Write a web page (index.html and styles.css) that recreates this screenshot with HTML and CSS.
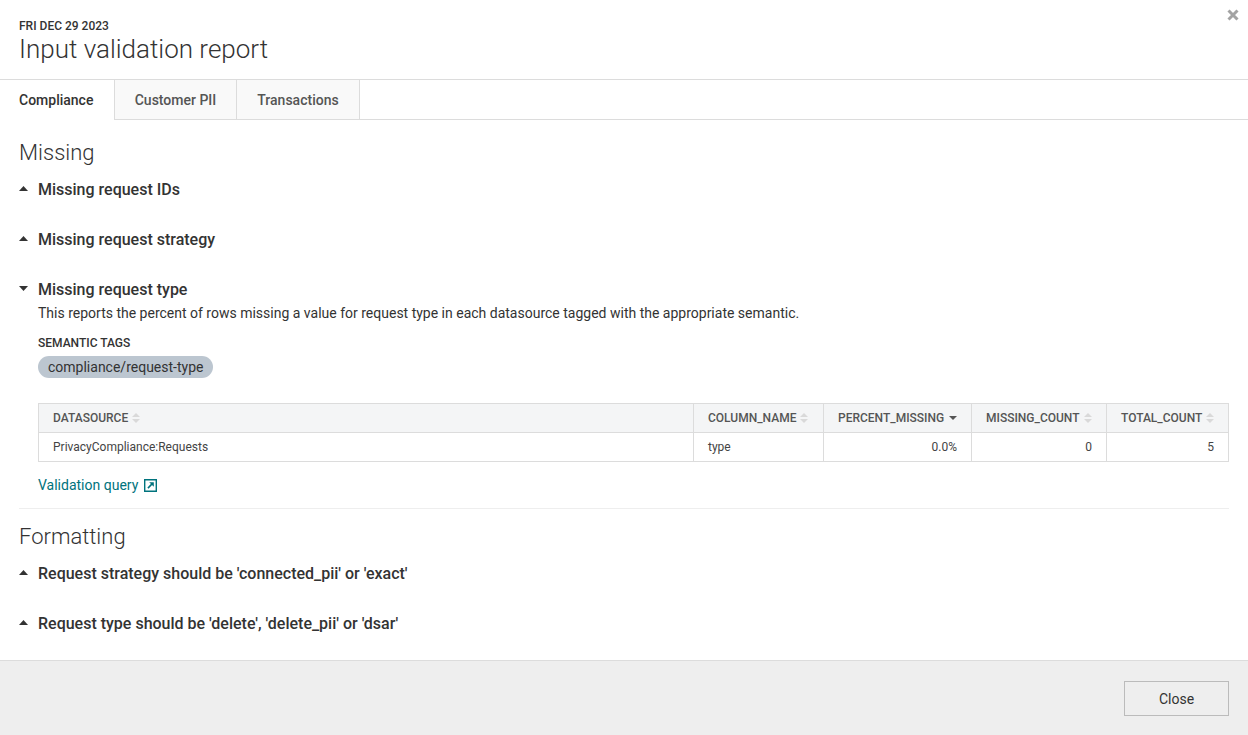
FILE: index.html
```html
<!DOCTYPE html>
<html lang="en">
<head>
    <meta charset="UTF-8">
    <meta name="viewport" content="width=device-width, initial-scale=1.0">
    <title>Input validation report</title>
    <link rel="stylesheet" href="styles.css">
</head>
<body>
    <div class="modal">
        <!-- Header -->
        <div class="modal-header">
            <div class="date">FRI DEC 29 2023</div>
            <h1>Input validation report</h1>
            <button type="button" class="close-x" aria-label="Close">
                <svg width="12" height="12" viewBox="0 0 12 12"><path d="M1.5 1.5l9 9M10.5 1.5l-9 9" stroke="#a3a3a3" stroke-width="3" fill="none"/></svg>
            </button>
        </div>

        <!-- Tabs -->
        <div class="tabs">
            <div class="tab active">Compliance</div>
            <div class="tab">Customer PII</div>
            <div class="tab">Transactions</div>
        </div>

        <div class="modal-body">
            <h2>Missing</h2>
            <div class="section">
                <div class="section-title"><span class="caret up"></span>Missing request IDs</div>
            </div>
            <div class="section">
                <div class="section-title"><span class="caret up"></span>Missing request strategy</div>
            </div>
            <div class="section open">
                <div class="section-title"><span class="caret down"></span>Missing request type</div>
                <div class="section-content">
                    <p class="description">This reports the percent of rows missing a value for request type in each datasource tagged with the appropriate semantic.</p>
                    <div class="tags-label">SEMANTIC TAGS</div>
                    <span class="tag">compliance/request-type</span>
                    <table class="report-table">
                        <thead>
                            <tr>
                                <th class="col-source">DATASOURCE<span class="sort"></span></th>
                                <th class="col-name">COLUMN_NAME<span class="sort"></span></th>
                                <th class="col-percent">PERCENT_MISSING<span class="sort-active"></span></th>
                                <th class="col-missing">MISSING_COUNT<span class="sort"></span></th>
                                <th class="col-total">TOTAL_COUNT<span class="sort"></span></th>
                            </tr>
                        </thead>
                        <tbody>
                            <tr>
                                <td>PrivacyCompliance:Requests</td>
                                <td>type</td>
                                <td class="num">0.0%</td>
                                <td class="num">0</td>
                                <td class="num">5</td>
                            </tr>
                        </tbody>
                    </table>
                    <a class="query-link" href="#">Validation query
                        <svg width="13" height="13" viewBox="0 0 13 13"><path d="M.7.7h11.6v11.6H.7z" fill="none" stroke="#00737d" stroke-width="1.4"/><path d="M3.9 9.1L8.6 4.4" fill="none" stroke="#00737d" stroke-width="1.5"/><path d="M5.2 3.2h4.6v4.6z" fill="#00737d"/></svg>
                    </a>
                </div>
            </div>
            <hr class="divider">
            <h2>Formatting</h2>
            <div class="section">
                <div class="section-title"><span class="caret up"></span>Request strategy should be 'connected_pii' or 'exact'</div>
            </div>
            <div class="section">
                <div class="section-title"><span class="caret up"></span>Request type should be 'delete', 'delete_pii' or 'dsar'</div>
            </div>
        </div>

        <div class="modal-footer">
            <button type="button" class="btn">Close</button>
        </div>
    </div>
</body>
</html>
```

FILE: styles.css
```css
* {
    margin: 0;
    padding: 0;
    box-sizing: border-box;
    font-family: Roboto, "Liberation Sans", sans-serif;
}

body {
    background: #fff;
    color: #333;
    overflow: hidden;
}

.modal {
    display: flex;
    flex-direction: column;
    height: 735px;
}

.modal-header {
    position: relative;
    height: 80px;
    padding: 19px 19px 0;
    border-bottom: 1px solid #dcdcdc;
}

.date {
    font-size: 12px;
    line-height: 14px;
    font-weight: 500;
    color: #333;
}

h1 {
    font-size: 26px;
    line-height: 32px;
    font-weight: 300;
    color: #333;
}

.close-x {
    position: absolute;
    top: 9px;
    right: 9px;
    width: 12px;
    height: 12px;
    display: flex;
    background: none;
    border: none;
}

.tabs {
    display: flex;
    height: 40px;
    border-bottom: 1px solid #dcdcdc;
}

.tab {
    width: 122px;
    height: 40px;
    line-height: 40px;
    text-align: center;
    font-size: 14px;
    font-weight: 500;
    color: #555;
    background: #f9f9f9;
    border-right: 1px solid #dcdcdc;
    border-bottom: 1px solid #dcdcdc;
}

.tab.active {
    width: 115px;
    padding-left: 19px;
    text-align: left;
    color: #333;
    background: #fff;
    border-bottom: none;
}

.tab:last-child {
    width: 123px;
}

.modal-body {
    flex: 1;
    padding: 19px 19px 0;
}

h2 {
    font-size: 22px;
    line-height: 28px;
    font-weight: 300;
    color: #333;
}

.section {
    margin-top: 11px;
    height: 39px;
}

.section.open {
    height: auto;
}

.section-title {
    display: flex;
    align-items: center;
    font-size: 16px;
    line-height: 24px;
    font-weight: 500;
    color: #333;
}

.caret {
    width: 9px;
    height: 5px;
    margin: -3px 10px 0 0;
    background: #333;
}

.caret.up {
    clip-path: polygon(50% 0, 100% 100%, 0 100%);
}

.caret.down {
    clip-path: polygon(0 0, 100% 0, 50% 100%);
}

.section-content {
    padding-left: 19px;
}

.description {
    margin-top: 1px;
    font-size: 14px;
    line-height: 20px;
    color: #333;
}

.tags-label {
    margin-top: 13px;
    font-size: 12px;
    line-height: 14px;
    font-weight: 500;
}

.tag {
    display: inline-block;
    margin-top: 6px;
    padding: 0 10px;
    height: 22px;
    line-height: 22px;
    font-size: 14px;
    color: #333;
    background: #bcc6d0;
    border-radius: 11px;
}

.report-table {
    display: table;
    width: 1190px;
    margin-top: 25px;
    table-layout: fixed;
    border-collapse: collapse;
    font-size: 12px;
    color: #444;
}

.report-table th,
.report-table td {
    height: 29px;
    padding: 0 14px;
    border: 1px solid #dcdcdc;
    text-align: left;
    white-space: nowrap;
}

.report-table th {
    font-weight: 500;
    color: #555;
    background: #f4f5f6;
}

.report-table .num {
    text-align: right;
}

.col-source { width: 655px; }
.col-name { width: 130px; }
.col-percent { width: 148px; }
.col-missing { width: 135px; }
.col-total { width: 122px; }

.sort {
    display: inline-block;
    position: relative;
    width: 8px;
    height: 10px;
    margin-left: 4px;
    vertical-align: -1px;
}

.sort::before,
.sort::after {
    content: "";
    position: absolute;
    left: 0;
    border-left: 4px solid transparent;
    border-right: 4px solid transparent;
}

.sort::before {
    top: 0;
    border-bottom: 4px solid #d9d9d9;
}

.sort::after {
    bottom: 0;
    border-top: 4px solid #d9d9d9;
}

.sort-active {
    display: inline-block;
    margin-left: 5px;
    vertical-align: 2px;
    border-left: 4px solid transparent;
    border-right: 4px solid transparent;
    border-top: 4px solid #555;
}

.query-link {
    display: inline-flex;
    align-items: center;
    gap: 6px;
    margin-top: 13px;
    font-size: 14px;
    line-height: 20px;
    color: #00737d;
    text-decoration: none;
}

.divider {
    margin-top: 13px;
    border: none;
    border-top: 1px solid #eee;
}

.divider + h2 {
    margin-top: 14px;
}

.modal-footer {
    display: flex;
    justify-content: flex-end;
    align-items: flex-start;
    height: 75px;
    padding: 20px 19px 0;
    background: #eee;
    border-top: 1px solid #dcdcdc;
}

.btn {
    width: 105px;
    height: 35px;
    font-size: 14px;
    color: #333;
    background: #eee;
    border: 1px solid #bbb;
}
```
